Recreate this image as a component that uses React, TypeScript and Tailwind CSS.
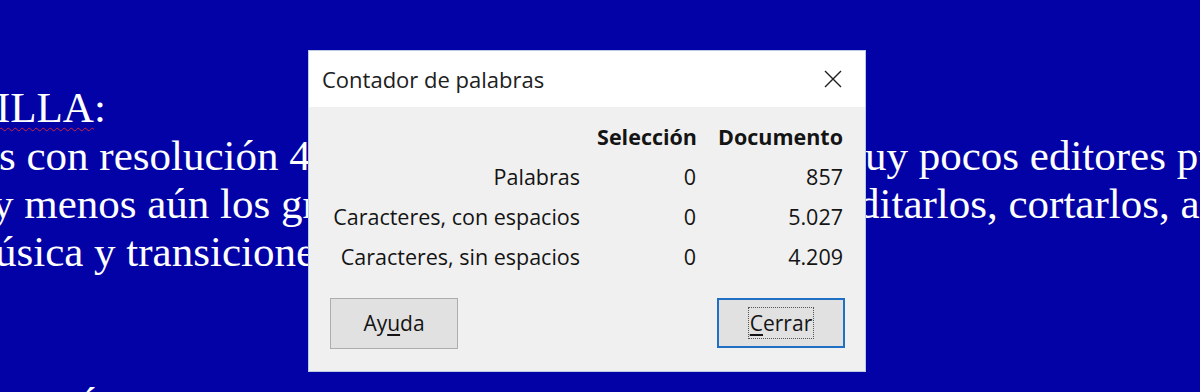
import React from "react";

const lines: { left: string; right?: string; cls: string }[] = [
  { left: "s con resolución 4K. Hay m", right: "uy pocos editores pueden abrirlos", cls: "ml-[-1px]" },
  { left: "y menos aún los gratuitos, para e", right: "ditarlos, cortarlos, añadir", cls: "ml-[-8px]" },
  { left: "úsica y transiciones.", cls: "ml-[-5px]" },
];

function CloseIcon() {
  return (
    <svg width="18" height="18" viewBox="0 0 18 18" fill="none" stroke="#1f1f1f" strokeWidth="1.4">
      <path d="M1 1 L17 17 M17 1 L1 17" />
    </svg>
  );
}

function WordCountDialog() {
  const rows = [
    { label: "Palabras", sel: "0", doc: "857" },
    { label: "Caracteres, con espacios", sel: "0", doc: "5.027" },
    { label: "Caracteres, sin espacios", sel: "0", doc: "4.209" },
  ];
  return (
    <div
      className="absolute left-[308px] top-[50px] flex h-[322px] w-[558px] flex-col border border-[#b9cbe4] text-[#141414]"
      style={{ fontFamily: '"Open Sans", "Noto Sans", sans-serif' }}
    >
      <div className="flex h-[56px] shrink-0 items-center justify-between bg-white pl-[13px] pr-[23px]">
        <span className="text-[22px] text-[#202020]">Contador de palabras</span>
        <CloseIcon />
      </div>
      <div className="flex flex-1 flex-col bg-[#f0f0f0] pt-[10px]">
        <div className="grid grid-cols-[271px_117px_146px] text-[21.5px]">
          <div className="h-[40px]" />
          <div className="flex h-[40px] items-center justify-end font-bold">Selección</div>
          <div className="flex h-[40px] items-center justify-end font-bold">Documento</div>
          {rows.map((r) => (
            <React.Fragment key={r.label}>
              <div className="flex h-[40px] items-center justify-end">{r.label}</div>
              <div className="flex h-[40px] items-center justify-end pr-[1px]">{r.sel}</div>
              <div className="flex h-[40px] items-center justify-end">{r.doc}</div>
            </React.Fragment>
          ))}
        </div>
        <div className="mt-[21px] flex justify-between pl-[21px] pr-[20px]">
          <button className="flex h-[51px] w-[128px] items-center justify-center border border-[#adadad] bg-[#e1e1e1] text-[21px]">
            Ay<span className="underline underline-offset-[3px]">u</span>da
          </button>
          <button className="flex h-[50px] w-[128px] items-center justify-center border-2 border-[#1f6fc5] bg-[#e1e1e1] text-[21px]">
            <span className="border border-dotted border-[#555] px-[1px] leading-[30px]">
              <span className="underline underline-offset-[3px]">C</span>errar
            </span>
          </button>
        </div>
      </div>
    </div>
  );
}

export default function App() {
  return (
    <div className="relative h-[392px] w-[1200px] overflow-hidden bg-[#0202a6]">
      <div
        className="whitespace-nowrap pt-[84px] text-[43px] leading-[48px] text-white"
        style={{ fontFamily: '"Liberation Serif", "Times New Roman", serif' }}
      >
        <div className="ml-[-4px]">
          <span className="underline decoration-wavy decoration-[#d02040] decoration-1 underline-offset-[5px]">ILLA</span>:
        </div>
        {lines.map((l) => (
          <div key={l.left} className="flex">
            <span className={`w-[868px] shrink-0 overflow-hidden ${l.cls}`}>{l.left}</span>
            {l.right ? <span className="ml-[-2px]">{l.right}</span> : null}
          </div>
        ))}
        <div>&nbsp;</div>
        <div>&nbsp;</div>
        <div className="ml-[44px] mt-[14px]">CÓMO EDITAR</div>
      </div>
      <WordCountDialog />
    </div>
  );
}
